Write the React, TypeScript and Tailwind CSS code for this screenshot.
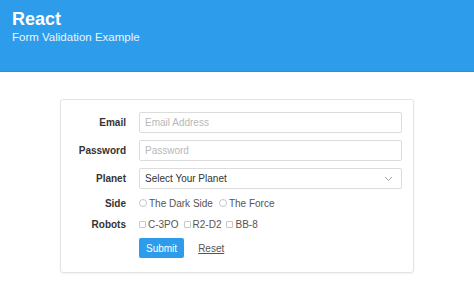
import React from "react";

export default function App() {
  return (
    <div className="w-[474px] h-[299px] bg-white font-['Liberation_Sans',Arial,sans-serif] text-[#333]">
      <div className="h-[72px] bg-[#2d9cea] border-b border-[#2a8fd6] px-3 pt-[8px]">
        <h1 className="text-[18px] leading-[22px] font-bold text-white">React</h1>
        <p className="text-[11.5px] leading-[14px] text-[#eaf5fd]">Form Validation Example</p>
      </div>
      <div className="px-[60px] pt-[27px]">
        <div className="w-[354px] h-[174px] border border-[#e3e3e3] rounded-[3px] shadow-[0_1px_2px_rgba(0,0,0,0.06)] pt-[12px] pl-[12px] pr-[11px]">
          <form className="flex flex-col gap-[7px]">
            <Row label="Email">
              <input
                placeholder="Email Address"
                className="block w-full h-[21px] border border-[#dcdcdc] rounded-[2px] px-[5px] text-[10px] placeholder:text-[#b8b8b8] outline-none"
              />
            </Row>
            <Row label="Password">
              <input
                placeholder="Password"
                className="block w-full h-[21px] border border-[#dcdcdc] rounded-[2px] px-[5px] text-[10px] placeholder:text-[#b8b8b8] outline-none"
              />
            </Row>
            <Row label="Planet">
              <div className="w-full h-[21px] border border-[#dcdcdc] rounded-[2px] px-[5px] flex items-center justify-between">
                <span className="text-[10px] text-[#333]">Select Your Planet</span>
                <svg width="9" height="6" viewBox="0 0 9 6" className="mr-[3px]">
                  <path d="M1 1 L4.5 4.5 L8 1" fill="none" stroke="#9aa4ad" strokeWidth="1" />
                </svg>
              </div>
            </Row>
            <div className="flex items-center h-[14px]">
              <Label text="Side" />
              <div className="flex items-center gap-[6px] text-[10px] text-[#555]">
                <Radio text="The Dark Side" />
                <Radio text="The Force" />
              </div>
            </div>
            <div className="flex items-center h-[14px]">
              <Label text="Robots" />
              <div className="flex items-center gap-[5px] text-[10px] text-[#555]">
                <Check text="C-3PO" />
                <Check text="R2-D2" />
                <Check text="BB-8" />
              </div>
            </div>
            <div className="flex items-center">
              <div className="w-[66px] shrink-0" />
              <button type="button" className="h-[20px] px-[7px] bg-[#2d9cea] text-white text-[10px] rounded-[2px]">
                Submit
              </button>
              <button type="button" className="ml-[14px] text-[10px] text-[#555] underline">
                Reset
              </button>
            </div>
          </form>
        </div>
      </div>
    </div>
  );
}

function Label({ text }: { text: string }) {
  return (
    <label className="w-[53px] shrink-0 mr-[13px] text-right text-[10px] font-bold text-[#333]">{text}</label>
  );
}

function Row({ label, children }: { label: string; children: React.ReactNode }) {
  return (
    <div className="flex items-center">
      <Label text={label} />
      <div className="flex-1">{children}</div>
    </div>
  );
}

function Radio({ text }: { text: string }) {
  return (
    <span className="flex items-center gap-[2px]">
      <span className="w-[8px] h-[8px] rounded-full border border-[#c8c8c8]" />
      {text}
    </span>
  );
}

function Check({ text }: { text: string }) {
  return (
    <span className="flex items-center gap-[2px]">
      <span className="w-[7px] h-[7px] rounded-[1px] border border-[#c8c8c8]" />
      {text}
    </span>
  );
}
